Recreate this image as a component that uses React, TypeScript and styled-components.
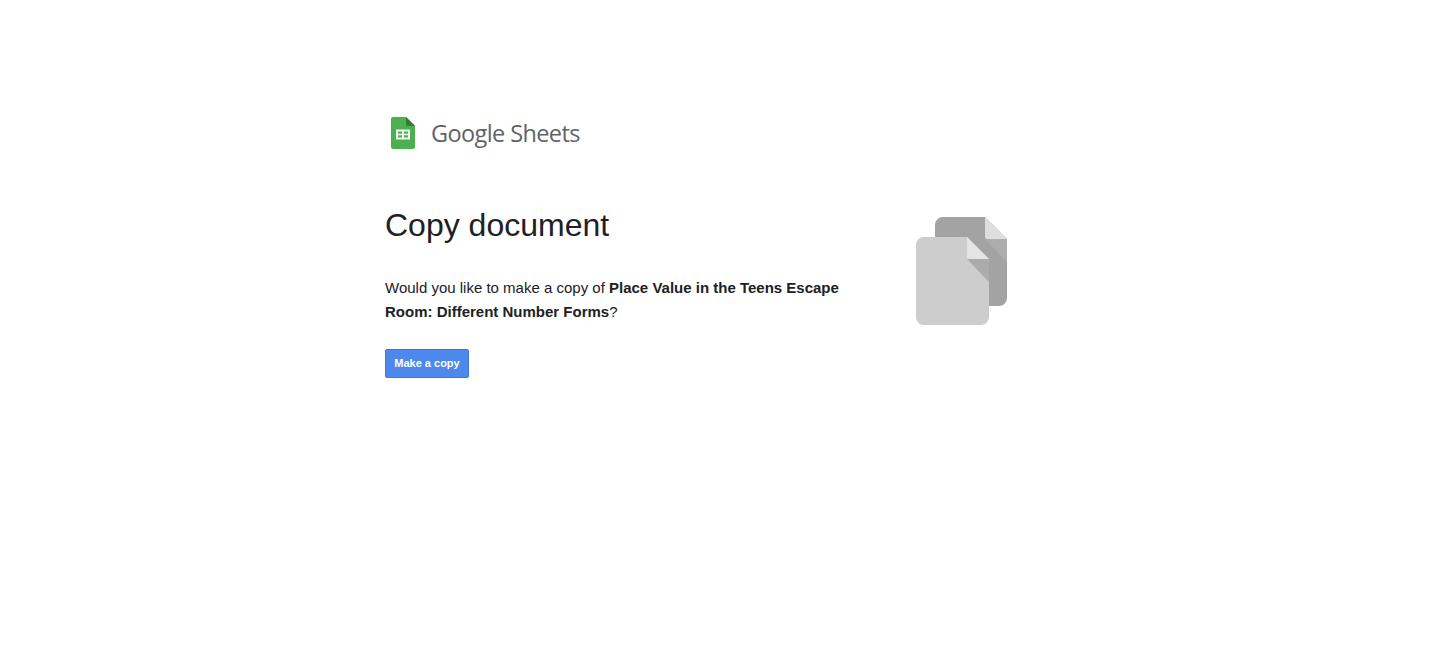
import React from "react";
import styled, { createGlobalStyle } from "styled-components";

const Global = createGlobalStyle`
  html, body { margin: 0; padding: 0; background: #fff; }
  body { font-family: "Liberation Sans", Arial, sans-serif; color: #202124; }
`;

const Page = styled.main`
  width: 1440px;
  height: 660px;
  overflow: hidden;
  box-sizing: border-box;
  padding: 116px 0 0 385px;
`;

const Brand = styled.div`
  display: flex;
  align-items: center;
  height: 34px;
  padding-left: 6px;
  gap: 16px;
`;

const BrandName = styled.span`
  font-family: "Open Sans", sans-serif;
  font-size: 23.5px;
  letter-spacing: -0.6px;
  color: #5f6368;
  line-height: 34px;
`;

const Body = styled.div`
  display: flex;
  align-items: flex-start;
  margin-top: 55px;
`;

const Copy = styled.div`
  width: 531px;
`;

const Title = styled.h1`
  margin: 0;
  font-size: 32px;
  font-weight: 400;
  line-height: 40px;
  color: #202124;
`;

const Message = styled.p`
  margin: 31px 0 0;
  width: 470px;
  font-size: 15px;
  line-height: 24px;
  color: #202124;
`;

const CopyButton = styled.button`
  display: block;
  margin-top: 25px;
  width: 84px;
  height: 29px;
  padding: 0 0 2px;
  box-sizing: border-box;
  background: #4d88ed;
  border: 1px solid #3b78e7;
  border-radius: 2px;
  color: #fff;
  font-family: "Liberation Sans", Arial, sans-serif;
  font-size: 11px;
  font-weight: 700;
`;

const DocsIcon = styled.svg`
  display: block;
  flex: none;
  margin-top: 12px;
`;

const SheetsLogo = () => (
  <svg width="24" height="32" viewBox="0 0 24 32" aria-hidden="true">
    <path d="M2 0H15L24 9V30a2 2 0 0 1-2 2H2a2 2 0 0 1-2-2V2a2 2 0 0 1 2-2Z" fill="#4caf50" />
    <path d="M15 0L24 9H17a2 2 0 0 1-2-2Z" fill="#2e7d32" />
    <path d="M5 12.500H19V22.500H5Z" fill="#f1f8f2" />
    <path d="M7 14.500H11V16.700H7ZM13 14.500H17V16.700H13ZM7 18.300H11V20.500H7ZM13 18.300H17V20.500H13Z" fill="#4caf50" />
  </svg>
);

export default function App() {
  return (
    <>
      <Global />
      <Page>
        <Brand>
          <SheetsLogo />
          <BrandName>Google Sheets</BrandName>
        </Brand>
        <Body>
          <Copy>
            <Title>Copy document</Title>
            <Message>
              Would you like to make a copy of <b>Place Value in the Teens Escape Room: Different Number Forms</b>?
            </Message>
            <CopyButton>Make a copy</CopyButton>
          </Copy>
          <DocsIcon width="92" height="109" viewBox="0 0 92 109" aria-hidden="true">
            <path d="M24 0H69L91 22V81a8 8 0 0 1-8 8H19V8a8 8 0 0 1 8-8Z" fill="#a3a3a3" />
            <path d="M69 0L91 22H71a2 2 0 0 1-2-2Z" fill="#dedede" />
            <path d="M69 22H91V45Z" fill="#adadad" />
            <path d="M8 20H51L73 42V100a8 8 0 0 1-8 8H8a8 8 0 0 1-8-8V28a8 8 0 0 1 8-8Z" fill="#cdcdcd" />
            <path d="M51 20L73 42H53a2 2 0 0 1-2-2Z" fill="#e4e4e4" />
            <path d="M51 42H73V65Z" fill="#ababab" />
          </DocsIcon>
        </Body>
      </Page>
    </>
  );
}
